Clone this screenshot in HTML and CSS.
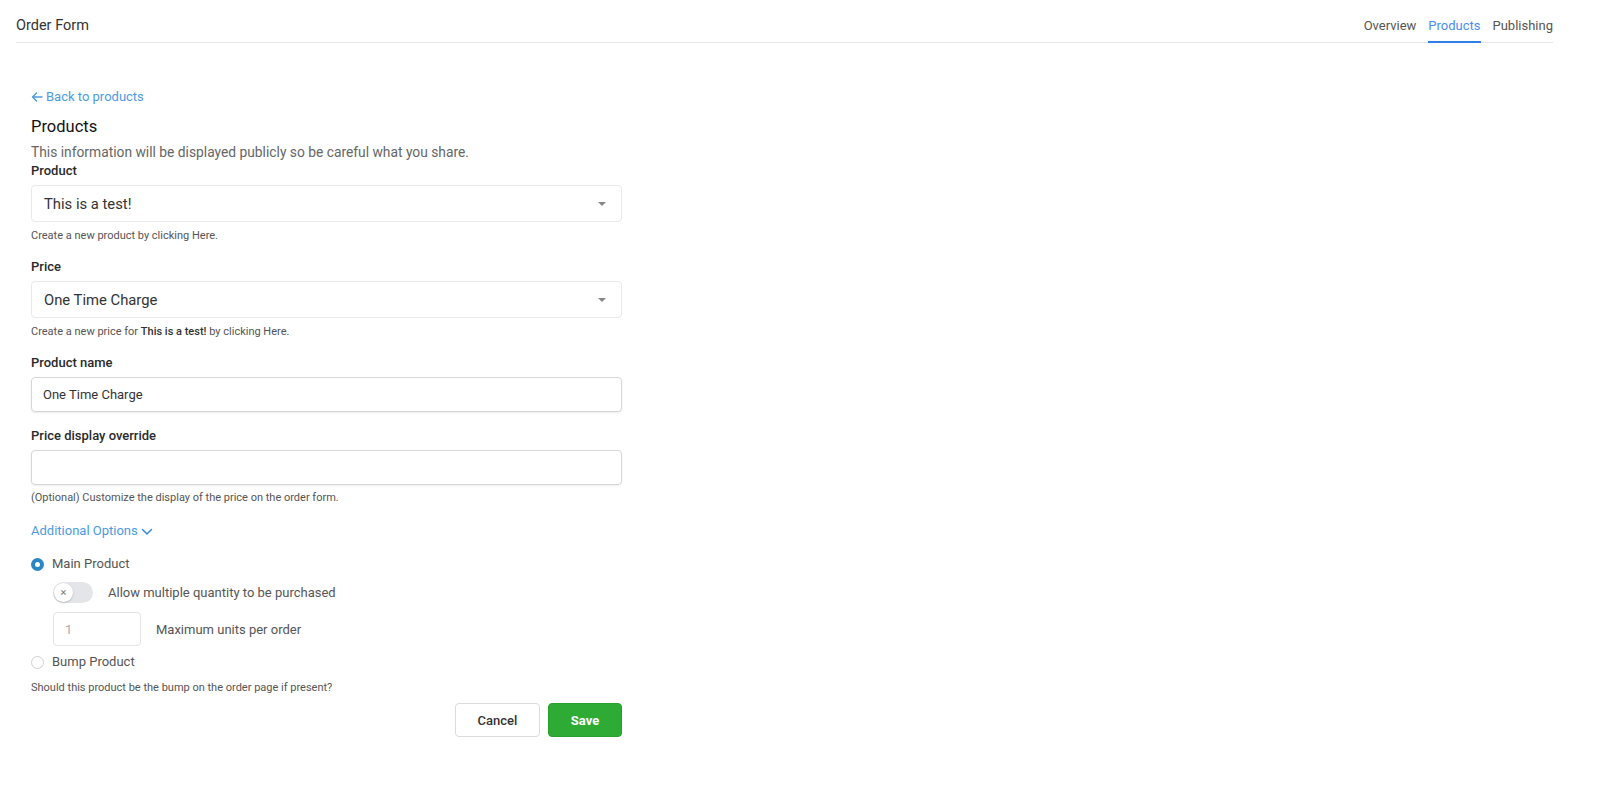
FILE: index.html
```html
<!DOCTYPE html>
<html lang="en">
<head>
<meta charset="utf-8">
<title>Order Form</title>
<link rel="stylesheet" href="styles.css">
</head>
<body>
<header class="topbar">
  <div class="title">Order Form</div>
  <nav class="tabs">
    <a class="tab">Overview</a>
    <a class="tab active">Products</a>
    <a class="tab">Publishing</a>
  </nav>
</header>
<main class="content">
  <a class="back"><svg class="back-ic" viewBox="0 0 12 12" width="12" height="12"><path d="M11 6H1.5M5.5 2L1.5 6l4 4" fill="none" stroke="currentColor" stroke-width="1.4" stroke-linecap="round" stroke-linejoin="round"/></svg>Back to products</a>
  <h1 class="heading">Products</h1>
  <p class="desc">This information will be displayed publicly so be careful what you share.</p>

  <div class="label first">Product</div>
  <div class="select"><span>This is a test!</span><span class="caret"></span></div>
  <div class="help">Create a new product by clicking Here.</div>

  <div class="label">Price</div>
  <div class="select"><span>One Time Charge</span><span class="caret"></span></div>
  <div class="help">Create a new price for <b>This is a test!</b> by clicking Here.</div>

  <div class="label">Product name</div>
  <div class="input">One Time Charge</div>

  <div class="label l2">Price display override</div>
  <div class="input"></div>
  <div class="help h2">(Optional) Customize the display of the price on the order form.</div>

  <a class="more">Additional Options<svg class="chev" viewBox="0 0 12 8" width="12" height="8"><path d="M1.5 1.5L6 6l4.5-4.5" fill="none" stroke="currentColor" stroke-width="1.6" stroke-linecap="round" stroke-linejoin="round"/></svg></a>

  <div class="radio-row first-radio"><span class="radio on"></span><span>Main Product</span></div>
  <div class="sub-row toggle-row"><span class="toggle"><span class="knob">×</span></span><span class="sub-text">Allow multiple quantity to be purchased</span></div>
  <div class="sub-row num-row"><span class="num">1</span><span class="sub-text">Maximum units per order</span></div>
  <div class="radio-row bump"><span class="radio"></span><span>Bump Product</span></div>
  <div class="help h3">Should this product be the bump on the order page if present?</div>

  <div class="actions">
    <button class="btn cancel">Cancel</button>
    <button class="btn save">Save</button>
  </div>
</main>
</body>
</html>
```

FILE: styles.css
```css
* { box-sizing: border-box; }
body {
  margin: 0;
  font-family: Roboto, "Liberation Sans", Arial, sans-serif;
  color: #333;
  background: #fff;
}
.topbar {
  display: flex;
  justify-content: space-between;
  margin: 0 47px 0 16px;
  border-bottom: 1px solid #e5e8eb;
}
.title {
  padding: 16px 0 6px;
  font-size: 14.5px;
  line-height: 20px;
  color: #333;
}
.tabs {
  display: flex;
  gap: 12px;
}
.tab {
  padding: 16px 0 5px;
  font-size: 13px;
  line-height: 20px;
  color: #555;
  border-bottom: 2px solid transparent;
  margin-bottom: -1px;
}
.tab.active {
  color: #4a8df0;
  border-bottom-color: #2f7fea;
}
.content {
  width: 622px;
  padding-left: 31px;
}
.back {
  display: flex;
  align-items: center;
  gap: 3px;
  margin-top: 45px;
  font-size: 13px;
  line-height: 18px;
  color: #4b9be2;
}
.back-ic { color: #4b9be2; }
.heading {
  margin: 9px 0 0;
  font-size: 16.5px;
  line-height: 24px;
  font-weight: 400;
  color: #111;
}
.desc {
  margin: 4px 0 0;
  font-size: 13.8px;
  line-height: 18px;
  color: #666;
}
.label {
  margin-top: 14px;
  font-size: 13px;
  line-height: 18px;
  font-weight: 500;
  color: #2a2a2a;
}
.label.first { margin-top: 1px; }
.label.l2 { margin-top: 15px; }
.select {
  margin-top: 5px;
  height: 37px;
  border: 1px solid #e9e9e9;
  border-radius: 4px;
  display: flex;
  align-items: center;
  justify-content: space-between;
  padding: 0 15px 0 12px;
  font-size: 14.8px;
  color: #333;
}
.caret {
  width: 0;
  height: 0;
  border-left: 4px solid transparent;
  border-right: 4px solid transparent;
  border-top: 4px solid #888;
}
.help {
  margin-top: 6px;
  font-size: 11px;
  line-height: 16px;
  color: #555;
}
.help b { font-weight: 500; color: #333; }
.help.h2 { margin-top: 5px; }
.input {
  margin-top: 5px;
  height: 35px;
  border: 1px solid #d6d6d6;
  border-radius: 4px;
  box-shadow: 0 1px 2px rgba(0,0,0,0.08);
  display: flex;
  align-items: center;
  padding: 0 11px;
  font-size: 13px;
  color: #333;
}
.more {
  display: flex;
  align-items: center;
  gap: 3px;
  margin-top: 16px;
  font-size: 13px;
  line-height: 18px;
  color: #4b9be2;
}
.chev { color: #3d8fd9; margin-top: 1px; }
.radio-row {
  display: flex;
  align-items: center;
  gap: 8px;
  font-size: 13px;
  line-height: 20px;
  color: #555;
}
.first-radio { margin-top: 14px; }
.radio {
  width: 13px;
  height: 13px;
  border-radius: 50%;
  border: 1px solid #d0d0d0;
  background: #fff;
}
.radio.on {
  border: 4px solid #2b86c5;
}
.bump { margin-top: 6px; }
.sub-row {
  display: flex;
  align-items: center;
  margin-left: 22px;
  font-size: 13px;
  color: #555;
}
.toggle-row { margin-top: 8px; gap: 15px; }
.toggle {
  width: 40px;
  height: 21px;
  border-radius: 11px;
  background: #e3e5e9;
  display: flex;
  align-items: center;
  padding-left: 1px;
}
.knob {
  width: 19px;
  height: 19px;
  border-radius: 50%;
  background: #fff;
  box-shadow: 0 1px 2px rgba(0,0,0,0.2);
  display: flex;
  align-items: center;
  justify-content: center;
  font-size: 11px;
  line-height: 1;
  color: #777;
}
.num-row { margin-top: 9px; gap: 15px; }
.num {
  width: 88px;
  height: 34px;
  border: 1px solid #e4e4e4;
  border-radius: 4px;
  display: flex;
  align-items: center;
  padding-left: 11px;
  font-size: 13px;
  color: #aaa;
}
.help.h3 { margin-top: 8px; }
.actions {
  display: flex;
  justify-content: flex-end;
  gap: 8px;
  margin-top: 7px;
}
.btn {
  height: 34px;
  border-radius: 4px;
  font-family: Roboto, "Liberation Sans", Arial, sans-serif;
  font-size: 13px;
  font-weight: 500;
}
.cancel {
  width: 85px;
  background: #fff;
  border: 1px solid #dcdcdc;
  color: #333;
}
.save {
  width: 74px;
  background: #2eab34;
  border: 1px solid #28a02f;
  color: #fff;
  font-weight: 700;
}
```
